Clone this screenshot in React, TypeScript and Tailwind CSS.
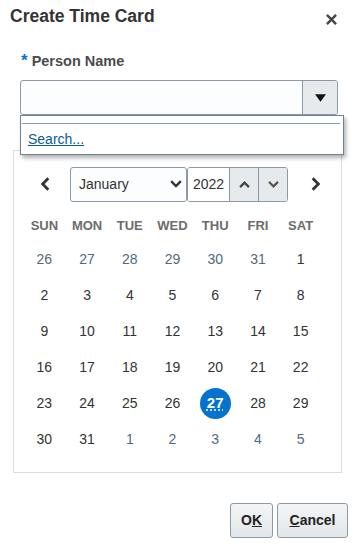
import React from 'react';

const font = { fontFamily: '"Liberation Sans", Arial, sans-serif' };

type Day = { n: number; other?: boolean; sel?: boolean };

const weeks: Day[][] = [
  [{ n: 26, other: true }, { n: 27, other: true }, { n: 28, other: true }, { n: 29, other: true }, { n: 30, other: true }, { n: 31, other: true }, { n: 1 }],
  [2, 3, 4, 5, 6, 7, 8].map((n) => ({ n })),
  [9, 10, 11, 12, 13, 14, 15].map((n) => ({ n })),
  [16, 17, 18, 19, 20, 21, 22].map((n) => ({ n })),
  [{ n: 23 }, { n: 24 }, { n: 25 }, { n: 26 }, { n: 27, sel: true }, { n: 28 }, { n: 29 }],
  [{ n: 30 }, { n: 31 }, { n: 1, other: true }, { n: 2, other: true }, { n: 3, other: true }, { n: 4, other: true }, { n: 5, other: true }],
];

function Chevron({ dir, className = '' }: { dir: 'up' | 'down' | 'left' | 'right'; className?: string }) {
  const d = {
    up: 'M2 8 L6 4 L10 8',
    down: 'M2 4 L6 8 L10 4',
    left: 'M8 2 L4 6 L8 10',
    right: 'M4 2 L8 6 L4 10',
  }[dir];
  return (
    <svg viewBox="0 0 12 12" className={className} fill="none" stroke="currentColor" strokeWidth="2.4" strokeLinecap="square">
      <path d={d} />
    </svg>
  );
}

export default function App() {
  return (
    <div className="relative w-[358px] h-[549px] bg-white text-[#333]" style={font}>
      {/* header */}
      <div className="flex items-center justify-between pl-[10px] pr-[21px] pt-[4px] h-[30px]">
        <h1 className="text-[17.5px] font-bold text-[#333] leading-none">Create Time Card</h1>
        <svg viewBox="0 0 12 12" className="w-[11px] h-[11px] mt-[4px] text-[#444]" stroke="currentColor" strokeWidth="2.6">
          <path d="M1 1 L11 11 M11 1 L1 11" />
        </svg>
      </div>

      {/* label */}
      <div className="mt-[24px] pl-[21px] flex items-start h-[16px]">
        <span className="text-[#0572ce] text-[17px] font-bold leading-none mr-[4px] -mt-[2px]">*</span>
        <span className="text-[14.5px] font-bold text-[#4b4b4b] leading-none">Person Name</span>
      </div>

      {/* input */}
      <div className="relative mx-[20px] mt-[10px] z-10">
        <div className="flex h-[35px] border border-[#8b9aa6] rounded-[3px] bg-[#fbfdff] overflow-hidden">
          <div className="flex-1" />
          <div className="w-[35px] border-l border-[#8b9aa6] bg-[#e6eaed] flex items-center justify-center">
            <svg viewBox="0 0 12 8" className="w-[11px] h-[8px]">
              <path d="M0 0 L12 0 L6 8 Z" fill="#111" />
            </svg>
          </div>
        </div>
        <div className="absolute left-0 top-[35px] w-[324px] h-[40px] bg-white border border-[#71828f] shadow-[2px_3px_4px_rgba(0,0,0,0.3)]">
          <div className="mt-[7px] mx-px h-px bg-[#8b9aa6] w-[318px]" />
          <div className="pl-[7px] pt-[8px] text-[14px] leading-none">
            <span className="text-[#0b5c93] underline">Search...</span>
          </div>
        </div>
      </div>

      {/* calendar */}
      <div className="mx-[13px] mt-[35px] w-[329px] h-[323px] border border-[#d7dfe6]">
        <div className="flex items-center mt-[15px] h-[36px]">
          <div className="w-[56px] flex justify-center pl-[6px] text-[#333]">
            <Chevron dir="left" className="w-[14px] h-[14px]" />
          </div>
          <div className="w-[117px] h-[35px] border border-[#8b9aa6] rounded-[3px] bg-[#fbfdff] flex items-center pl-[8px] pr-[4px] text-[14px] text-[#333]">
            <span className="flex-1">January</span>
            <Chevron dir="down" className="w-[12px] h-[12px] text-[#333]" />
          </div>
          <div className="flex h-[35px] border border-[#8b9aa6] rounded-[3px] overflow-hidden">
            <div className="w-[41px] bg-white flex items-center justify-center text-[14px] text-[#333]">2022</div>
            <div className="w-[29px] border-l border-[#8b9aa6] bg-[#e6eaed] flex items-center justify-center text-[#444]">
              <Chevron dir="up" className="w-[11px] h-[11px]" />
            </div>
            <div className="w-[29px] border-l border-[#8b9aa6] bg-[#e6eaed] flex items-center justify-center text-[#555]">
              <Chevron dir="down" className="w-[11px] h-[11px]" />
            </div>
          </div>
          <div className="flex-1 flex justify-center pl-[2px] text-[#333]">
            <Chevron dir="right" className="w-[14px] h-[14px]" />
          </div>
        </div>

        <div className="pl-[9px] w-[308px] mt-[17px]">
          <div className="grid grid-cols-7 h-[16px] text-[13px] font-bold text-[#6c6c6c] leading-none">
            {['SUN', 'MON', 'TUE', 'WED', 'THU', 'FRI', 'SAT'].map((d) => (
              <div key={d} className="text-center">{d}</div>
            ))}
          </div>
          <div className="mt-[6px]">
            {weeks.map((w, i) => (
              <div key={i} className="grid grid-cols-7 h-[36px]">
                {w.map((d, j) => (
                  <div key={j} className="flex items-center justify-center">
                    {d.sel ? (
                      <span className="w-[31px] h-[31px] rounded-full bg-[#0572ce] text-white font-bold text-[15px] flex items-center justify-center">
                        <span className="underline decoration-dotted underline-offset-2">27</span>
                      </span>
                    ) : (
                      <span className={`text-[14px] ${d.other ? 'text-[#4f6a80]' : 'text-[#333]'}`}>{d.n}</span>
                    )}
                  </div>
                ))}
              </div>
            ))}
          </div>
        </div>
      </div>

      {/* buttons */}
      <div className="flex justify-end gap-[4px] pr-[10px] mt-[30px]">
        <button className="w-[43px] h-[35px] border border-[#8b9aa6] rounded-[3px] bg-gradient-to-b from-[#f3f5f6] to-[#e3e7ea] text-[14px] font-bold text-[#222]">
          O<span className="underline">K</span>
        </button>
        <button className="w-[71px] h-[35px] border border-[#8b9aa6] rounded-[3px] bg-gradient-to-b from-[#f3f5f6] to-[#e3e7ea] text-[14px] font-bold text-[#222]">
          <span className="underline">C</span>ancel
        </button>
      </div>
    </div>
  );
}
